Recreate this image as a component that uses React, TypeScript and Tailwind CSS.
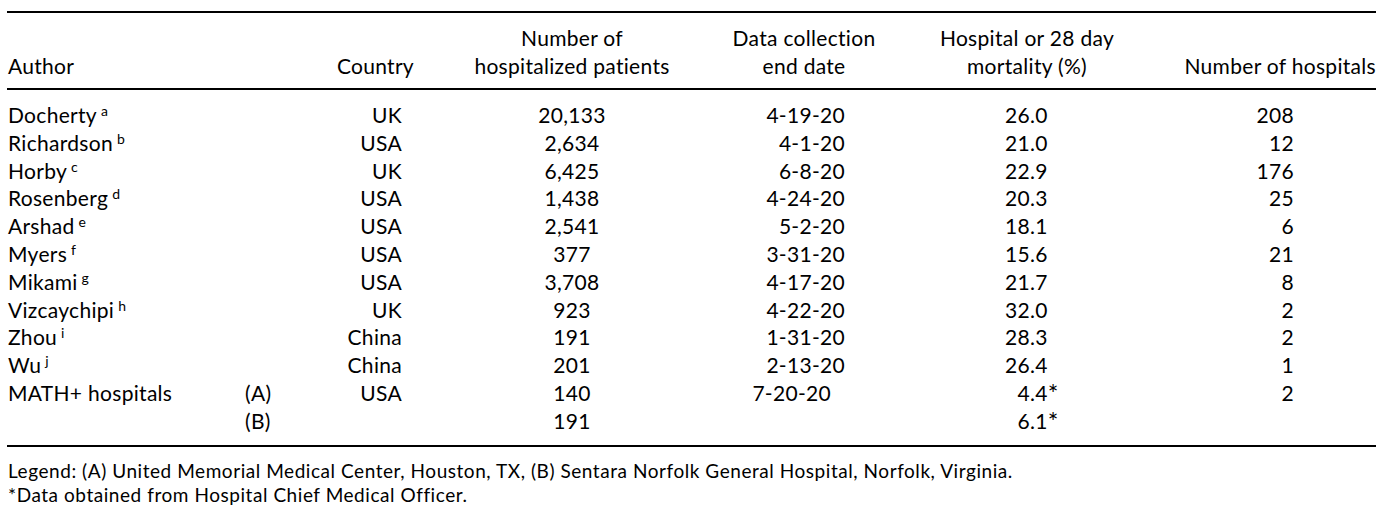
const rows = [
  { author: "Docherty", sup: "a", country: "UK", patients: "20,133", date: "4-19-20", mort: ["26", ".0", ""], hosp: "208" },
  { author: "Richardson", sup: "b", country: "USA", patients: "2,634", date: "4-1-20", mort: ["21", ".0", ""], hosp: "12" },
  { author: "Horby", sup: "c", country: "UK", patients: "6,425", date: "6-8-20", mort: ["22", ".9", ""], hosp: "176" },
  { author: "Rosenberg", sup: "d", country: "USA", patients: "1,438", date: "4-24-20", mort: ["20", ".3", ""], hosp: "25" },
  { author: "Arshad", sup: "e", country: "USA", patients: "2,541", date: "5-2-20", mort: ["18", ".1", ""], hosp: "6" },
  { author: "Myers", sup: "f", country: "USA", patients: "377", date: "3-31-20", mort: ["15", ".6", ""], hosp: "21" },
  { author: "Mikami", sup: "g", country: "USA", patients: "3,708", date: "4-17-20", mort: ["21", ".7", ""], hosp: "8" },
  { author: "Vizcaychipi", sup: "h", country: "UK", patients: "923", date: "4-22-20", mort: ["32", ".0", ""], hosp: "2" },
  { author: "Zhou", sup: "i", country: "China", patients: "191", date: "1-31-20", mort: ["28", ".3", ""], hosp: "2" },
  { author: "Wu", sup: "j", country: "China", patients: "201", date: "2-13-20", mort: ["26", ".4", ""], hosp: "1" },
];

const grid = "grid grid-cols-[233px_80px_100px_304px_160px_286px_206px]";

function Mortality({ parts }: { parts: string[] }) {
  return (
    <div className="flex pl-[121px]">
      <span className="w-[25px] text-right">{parts[0]}</span>
      <span>{parts[1]}</span>
      {parts[2] && <span className="text-[25px] leading-[27.8px] relative top-[1px]">{parts[2]}</span>}
    </div>
  );
}

export default function App() {
  return (
    <div className="w-[1393px] h-[514px] bg-white text-black font-['Lato','Liberation_Sans',sans-serif] pt-[11px] pl-[7px]">
      <div className="w-[1369px]">
        <div className="h-[2px] bg-black" />

        {/* header */}
        <div className={`${grid} text-[21px] tracking-[0.3px] leading-[28px] pt-[11px] pb-[8px] items-end`}>
          <div className="pl-[1px]">Author</div>
          <div />
          <div className="text-right pr-[6px]">Country</div>
          <div className="text-center">
            Number of
            <br />
            hospitalized patients
          </div>
          <div className="text-center">
            Data collection
            <br />
            end date
          </div>
          <div className="text-center">
            Hospital or 28 day
            <br />
            mortality (%)
          </div>
          <div className="text-right">Number of hospitals</div>
        </div>

        <div className="h-[2px] bg-black" />

        {/* body */}
        <div className="text-[21px] tracking-[0.3px] leading-[27.8px] pt-[11px] pb-[10px]">
          {rows.map((r) => (
            <div key={r.author} className={grid}>
              <div className="pl-[1px]">
                {r.author}
                <sup className="text-[14px] ml-[4px]">{r.sup}</sup>
              </div>
              <div />
              <div className="text-right pr-[18px]">{r.country}</div>
              <div className="text-center">{r.patients}</div>
              <div className="text-right pr-[39px]">{r.date}</div>
              <Mortality parts={r.mort} />
              <div className="text-right pr-[82px]">{r.hosp}</div>
            </div>
          ))}
          <div className={grid}>
            <div className="pl-[1px]">MATH+ hospitals</div>
            <div className="pl-[5px]">(A)</div>
            <div className="text-right pr-[18px]">USA</div>
            <div className="text-center">140</div>
            <div className="text-right pr-[53px]">7-20-20</div>
            <Mortality parts={["4", ".4", "*"]} />
            <div className="text-right pr-[82px]">2</div>
          </div>
          <div className={grid}>
            <div />
            <div className="pl-[5px]">(B)</div>
            <div />
            <div className="text-center">191</div>
            <div />
            <Mortality parts={["6", ".1", "*"]} />
            <div />
          </div>
        </div>

        <div className="h-[2px] bg-black" />

        {/* footnotes */}
        <div className="text-[19px] tracking-[0.55px] leading-[24px] pt-[12px] pl-[1px]">
          <p>
            Legend: (A) United Memorial Medical Center, Houston, TX, (B) Sentara Norfolk General
            Hospital, Norfolk, Virginia.
          </p>
          <p>*Data obtained from Hospital Chief Medical Officer.</p>
        </div>
      </div>
    </div>
  );
}
